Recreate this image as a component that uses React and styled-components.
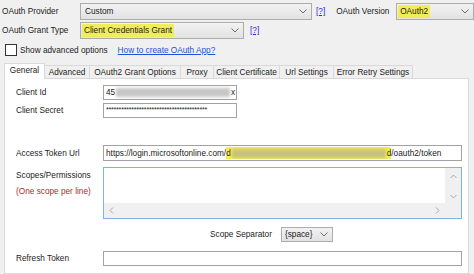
import React from 'react';
import styled, { createGlobalStyle } from 'styled-components';

const Global = createGlobalStyle`
  html, body { margin: 0; padding: 0; background: #f0f0f0; }
  body {
    font-family: "Liberation Sans", Arial, sans-serif;
    font-size: 8.25px;
    color: #1c1c1c;
  }
  * { box-sizing: border-box; }
`;

const Page = styled.div`
  width: 474px;
  height: 274px;
  overflow: hidden;
  display: flex;
  flex-direction: column;
  padding-top: 3px;
`;

const TopRow = styled.div`
  display: flex;
  align-items: center;
  height: 17px;
  margin-top: ${p => p.$mt || 0}px;
`;

const TopLabel = styled.div`
  width: ${p => p.$w}px;
  padding-left: ${p => p.$pl || 0}px;
  margin-left: ${p => p.$ml || 0}px;
  flex: none;
  white-space: nowrap;
`;

const Combo = styled.div`
  width: ${p => p.$w}px;
  height: ${p => p.$h || 17}px;
  flex: none;
  border: 1px solid #adadad;
  background: linear-gradient(#f2f2f2, #e2e2e2);
  display: flex;
  align-items: stretch;
  padding: 1px;
  margin-left: ${p => p.$ml || 0}px;
`;

const ComboValue = styled.div`
  flex: 1;
  display: flex;
  align-items: center;
  padding-left: ${p => p.$pl ?? 3}px;
  white-space: nowrap;
  overflow: hidden;
`;

const Highlight = styled.span`
  display: inline-flex;
  align-items: center;
  align-self: stretch;
  background: #f1ec5a;
  padding: 0 ${p => p.$px ?? 2}px;
`;

const ChevronBox = styled.div`
  width: 14px;
  flex: none;
  display: flex;
  align-items: center;
  justify-content: center;
`;

const Chevron = () => (
  <ChevronBox>
    <svg width="8" height="5" viewBox="0 0 8 5">
      <polyline points="0.5,0.5 4,4 7.5,0.5" fill="none" stroke="#6d6d6d" strokeWidth="1" />
    </svg>
  </ChevronBox>
);

const HelpLink = styled.span`
  color: #2a2ad8;
  text-decoration: underline;
  margin-left: ${p => p.$ml || 4}px;
  flex: none;
`;

const CheckRow = styled.div`
  display: flex;
  align-items: center;
  height: 16px;
  margin-top: 3px;
  padding-left: 5px;
`;

const CheckBox = styled.div`
  width: 12px;
  height: 12px;
  border: 1px solid #333;
  background: #fff;
  flex: none;
`;

const CheckText = styled.span`
  margin-left: 3px;
  white-space: nowrap;
`;

const Link = styled.span`
  color: #1f52d6;
  text-decoration: underline;
  margin-left: 10px;
  white-space: nowrap;
`;

const TabStrip = styled.div`
  display: flex;
  align-items: flex-end;
  height: 15px;
  margin-top: 5px;
  padding-left: 4px;
`;

const Tab = styled.div`
  width: ${p => p.$w}px;
  height: ${p => (p.$active ? 16 : 13)}px;
  flex: none;
  display: flex;
  align-items: center;
  justify-content: center;
  white-space: nowrap;
  border: 1px solid #d9d9d9;
  border-bottom: none;
  background: ${p => (p.$active ? '#fff' : '#f0f0f0')};
  margin-left: ${p => (p.$first ? 0 : -1)}px;
  margin-bottom: ${p => (p.$active ? -1 : 0)}px;
  position: relative;
  z-index: ${p => (p.$active ? 1 : 0)};
  padding-bottom: ${p => (p.$active ? 2 : 0)}px;
`;

const Panel = styled.div`
  flex: 1;
  margin: 0 5px 0 4px;
  background: #fff;
  border: 1px solid #d9d9d9;
  padding: 6px 6px 0 11px;
  display: flex;
  flex-direction: column;
`;

const Row = styled.div`
  display: flex;
  align-items: ${p => (p.$top ? 'flex-start' : 'center')};
  margin-top: ${p => p.$mt || 0}px;
  padding-left: ${p => p.$pl || 0}px;
`;

const FieldLabel = styled.div`
  width: 87px;
  flex: none;
  white-space: nowrap;
`;

const ScopeLabels = styled.div`
  width: 87px;
  flex: none;
  padding-top: 3px;
  line-height: 12px;
  white-space: nowrap;
`;

const Hint = styled.div`
  color: #b02a2a;
  margin-top: 4px;
`;

const TextBox = styled.div`
  height: ${p => p.$h || 15}px;
  width: ${p => (p.$w ? `${p.$w}px` : 'auto')};
  flex: ${p => (p.$w ? 'none' : 1)};
  border: 1px solid #a2a2a2;
  background: #fff;
  display: flex;
  align-items: ${p => (p.$topText ? 'flex-start' : 'center')};
  padding: 1px 1px 1px 2px;
  white-space: nowrap;
  overflow: hidden;
`;

const Stars = styled.span`
  font-size: 7px;
  letter-spacing: -0.2px;
  line-height: 8px;
  padding-top: 1px;
`;

const Blur = styled.span`
  display: inline-block;
  width: ${p => (p.$w ? `${p.$w}px` : 'auto')};
  flex: ${p => (p.$w ? 'none' : 1)};
  height: 9px;
  background: ${p => p.$c};
  filter: blur(1.6px);
  margin: 0 1px;
`;

const TextArea = styled.div`
  flex: 1;
  height: 52px;
  border: 1px solid #7eb2e6;
  background: #fff;
  display: grid;
  grid-template-columns: 1fr 16px;
  grid-template-rows: 1fr 15px;
`;

const VBar = styled.div`
  background: #f0f0f0;
  display: flex;
  flex-direction: column;
  align-items: center;
  justify-content: space-between;
  padding: 6px 0 4px;
`;

const HBar = styled.div`
  background: #f0f0f0;
  display: flex;
  align-items: center;
  justify-content: space-between;
  padding: 0 5px;
`;

const Corner = styled.div`
  background: #f0f0f0;
`;

const Arrow = ({ dir }) => {
  const pts = {
    up: '0.5,4 3.5,1 6.5,4',
    down: '0.5,1 3.5,4 6.5,1',
    left: '4,0.5 1,3.5 4,6.5',
    right: '1,0.5 4,3.5 1,6.5',
  }[dir];
  const horiz = dir === 'left' || dir === 'right';
  return (
    <svg width={horiz ? 5 : 7} height={horiz ? 7 : 5} viewBox={horiz ? '0 0 5 7' : '0 0 7 5'}>
      <polyline points={pts} fill="none" stroke="#a6a6a6" strokeWidth="1" />
    </svg>
  );
};

const tabs = [
  { label: 'General', w: 41, active: true },
  { label: 'Advanced', w: 46 },
  { label: 'OAuth2 Grant Options', w: 92 },
  { label: 'Proxy', w: 34 },
  { label: 'Client Certificate', w: 67 },
  { label: 'Url Settings', w: 55 },
  { label: 'Error Retry Settings', w: 80 },
];

export default function App() {
  return (
    <>
      <Global />
      <Page>
        <TopRow>
          <TopLabel $w={80} $pl={2}>OAuth Provider</TopLabel>
          <Combo $w={232}>
            <ComboValue>Custom</ComboValue>
            <Chevron />
          </Combo>
          <HelpLink>[?]</HelpLink>
          <TopLabel $w={60} $ml={11}>OAuth Version</TopLabel>
          <Combo $w={78}>
            <ComboValue $pl={0}>
              <Highlight>OAuth2</Highlight>
            </ComboValue>
            <Chevron />
          </Combo>
        </TopRow>
        <TopRow $mt={2}>
          <TopLabel $w={80} $pl={2}>OAuth Grant Type</TopLabel>
          <Combo $w={164}>
            <ComboValue $pl={0}>
              <Highlight>Client Credentials Grant</Highlight>
            </ComboValue>
            <Chevron />
          </Combo>
          <HelpLink $ml={6}>[?]</HelpLink>
        </TopRow>
        <CheckRow>
          <CheckBox />
          <CheckText>Show advanced options</CheckText>
          <Link>How to create OAuth App?</Link>
        </CheckRow>
        <TabStrip>
          {tabs.map((t, i) => (
            <Tab key={t.label} $w={t.w} $active={t.active} $first={i === 0}>
              {t.label}
            </Tab>
          ))}
        </TabStrip>
        <Panel>
          <Row>
            <FieldLabel>Client Id</FieldLabel>
            <TextBox $w={134}>
              <span>45</span>
              <Blur $c="#c6c6c6" />
              <span>x</span>
            </TextBox>
          </Row>
          <Row $mt={3}>
            <FieldLabel>Client Secret</FieldLabel>
            <TextBox $w={134} $topText>
              <Stars>{'*'.repeat(40)}</Stars>
            </TextBox>
          </Row>
          <Row $mt={27}>
            <FieldLabel>Access Token Url</FieldLabel>
            <TextBox $h={16}>
              <span>https://login.microsoftonline.com/</span>
              <Highlight $px={0}>
                d<Blur $w={154} $c="#c9c27a" />d
              </Highlight>
              <span>/oauth2/token</span>
            </TextBox>
          </Row>
          <Row $mt={6} $top>
            <ScopeLabels>
              <div>Scopes/Permissions</div>
              <Hint>(One scope per line)</Hint>
            </ScopeLabels>
            <TextArea>
              <div />
              <VBar>
                <Arrow dir="up" />
                <Arrow dir="down" />
              </VBar>
              <HBar>
                <Arrow dir="left" />
                <Arrow dir="right" />
              </HBar>
              <Corner />
            </TextArea>
          </Row>
          <Row $mt={8} $pl={194}>
            <span>Scope Separator</span>
            <Combo $w={52} $h={15} $ml={9}>
              <ComboValue $pl={2}>{'{space}'}</ComboValue>
              <Chevron />
            </Combo>
          </Row>
          <Row $mt={9}>
            <FieldLabel>Refresh Token</FieldLabel>
            <TextBox />
          </Row>
        </Panel>
      </Page>
    </>
  );
}
